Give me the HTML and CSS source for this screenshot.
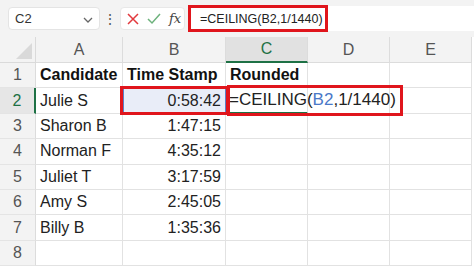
FILE: index.html
```html
<!DOCTYPE html>
<html lang="en">
<head>
    <meta charset="UTF-8">
    <title>CEILING</title>
    <link rel="stylesheet" href="styles.css">
</head>
<body>
    <div class="toolbar">
        <div class="namebox">
            <span>C2</span>
            <svg class="chev" width="10" height="6" viewBox="0 0 10 6"><path d="M1 1l4 4 4-4" fill="none" stroke="#666" stroke-width="1.3"/></svg>
        </div>
        <div class="dots">&#8942;</div>
        <div class="fnbox">
            <svg width="12" height="12" viewBox="0 0 12 12"><path d="M1 1l10 10M11 1L1 11" stroke="#e2393e" stroke-width="1.5"/></svg>
            <svg width="14" height="12" viewBox="0 0 14 12"><path d="M1 6l4 4 8-9" fill="none" stroke="#6db27c" stroke-width="1.5"/></svg>
            <span class="fx">fx</span>
        </div>
        <div class="formula">
            <span class="ftext">=CEILING(B2,1/1440)</span>
            <div class="redbox bar-red"></div>
        </div>
    </div>

    <div class="sheet">
        <div class="corner"></div>
        <div class="colhead">A</div>
        <div class="colhead">B</div>
        <div class="colhead active">C</div>
        <div class="colhead">D</div>
        <div class="colhead">E</div>

        <div class="rowhead">1</div>
        <div class="cell bold">Candidate</div>
        <div class="cell bold">Time Stamp</div>
        <div class="cell bold">Rounded</div>
        <div class="cell"></div>
        <div class="cell"></div>

        <div class="rowhead active">2</div>
        <div class="cell">Julie S</div>
        <div class="cell num ref">0:58:42</div>
        <div class="cell editing">=CEILING(<span class="blue">B2</span>,1/1440)</div>
        <div class="cell"></div>
        <div class="cell"></div>

        <div class="rowhead">3</div>
        <div class="cell">Sharon B</div>
        <div class="cell num">1:47:15</div>
        <div class="cell"></div>
        <div class="cell"></div>
        <div class="cell"></div>

        <div class="rowhead">4</div>
        <div class="cell">Norman F</div>
        <div class="cell num">4:35:12</div>
        <div class="cell"></div>
        <div class="cell"></div>
        <div class="cell"></div>

        <div class="rowhead">5</div>
        <div class="cell">Juliet T</div>
        <div class="cell num">3:17:59</div>
        <div class="cell"></div>
        <div class="cell"></div>
        <div class="cell"></div>

        <div class="rowhead">6</div>
        <div class="cell">Amy S</div>
        <div class="cell num">2:45:05</div>
        <div class="cell"></div>
        <div class="cell"></div>
        <div class="cell"></div>

        <div class="rowhead">7</div>
        <div class="cell">Billy B</div>
        <div class="cell num">1:35:36</div>
        <div class="cell"></div>
        <div class="cell"></div>
        <div class="cell"></div>

        <div class="rowhead">8</div>
        <div class="cell"></div>
        <div class="cell"></div>
        <div class="cell"></div>
        <div class="cell"></div>
        <div class="cell"></div>

        <div class="redbox b2-red"></div>
        <div class="redbox c2-red"></div>
    </div>
</body>
</html>
```

FILE: styles.css
```css
body {
    margin: 0;
    background: #fff;
    font-family: "Liberation Sans", Arial, sans-serif;
    overflow: hidden;
}
.toolbar {
    height: 37px;
    background: #f3f3f3;
    display: flex;
    align-items: center;
    padding-left: 8px;
    box-sizing: border-box;
}
.namebox {
    width: 92px;
    height: 23px;
    background: #fff;
    border: 1px solid #e4e4e4;
    border-radius: 4px;
    box-sizing: border-box;
    display: flex;
    align-items: center;
    justify-content: space-between;
    padding: 0 6px 0 6px;
    font-size: 13px;
    color: #333;
}
.chev {
    margin-top: 2px;
}
.dots {
    width: 20px;
    text-align: center;
    font-size: 14px;
    color: #555;
}
.fnbox {
    width: 65px;
    height: 23px;
    background: #fff;
    border: 1px solid #e8e8e8;
    border-radius: 4px;
    box-sizing: border-box;
    display: flex;
    align-items: center;
    gap: 8px;
    padding-left: 6px;
}
.fx {
    font-family: "DejaVu Serif", serif;
    font-style: italic;
    font-size: 13px;
    color: #444;
}
.formula {
    flex: 1;
    height: 25px;
    margin-left: 5px;
    background: #fff;
    display: flex;
    align-items: center;
    padding-left: 10px;
    font-size: 12.5px;
    color: #222;
    position: relative;
}
.sheet {
    display: grid;
    grid-template-columns: 36px 87px 103px 82px 82px 82px;
    grid-template-rows: 26px repeat(8, 25.4px);
    position: relative;
}
.corner {
    background: #f3f3f3;
    border-right: 1px solid #dadada;
    border-bottom: 1px solid #dadada;
    position: relative;
}
.corner::after {
    content: "";
    position: absolute;
    right: 3px;
    bottom: 3px;
    border-left: 16px solid transparent;
    border-bottom: 16px solid #d9d9d9;
}
.colhead {
    background: #f3f3f3;
    border-right: 1px solid #dcdcdc;
    border-bottom: 1px solid #dcdcdc;
    display: flex;
    align-items: center;
    justify-content: center;
    font-size: 16px;
    color: #555;
}
.colhead.active {
    background: #e1e1e1;
    color: #1e7145;
    border-bottom: 2px solid #1e7145;
}
.rowhead {
    background: #f3f3f3;
    border-right: 1px solid #dcdcdc;
    border-bottom: 1px solid #e4e4e4;
    display: flex;
    align-items: center;
    justify-content: center;
    font-size: 16px;
    color: #555;
}
.rowhead.active {
    background: #e6e6e6;
    color: #1e7145;
    border-right: 2px solid #1e7145;
}
.cell {
    border-right: 1px solid #e2e2e2;
    border-bottom: 1px solid #e2e2e2;
    display: flex;
    align-items: center;
    padding: 0 4px;
    font-size: 16px;
    color: #222;
    white-space: nowrap;
    box-sizing: border-box;
}
.bold {
    font-weight: bold;
    color: #111;
    overflow: visible;
}
.num {
    justify-content: flex-end;
}
.ref {
    background: #e9edf8;
    border: 1px solid #5b7fc6;
}
.editing {
    border-left: 2px solid #1e7145;
    border-bottom: 2px solid #1e7145;
    padding-left: 1px;
    font-size: 17px;
    overflow: visible;
    position: relative;
    z-index: 1;
}
.blue {
    color: #4a78c8;
}
.redbox {
    position: absolute;
    border: 3px solid #e0151c;
    box-sizing: border-box;
    pointer-events: none;
    z-index: 2;
}
.bar-red {
    left: -2px;
    top: -1px;
    width: 140px;
    height: 27px;
}
.b2-red {
    left: 120px;
    top: 49px;
    width: 109px;
    height: 29px;
}
.c2-red {
    left: 227px;
    top: 48px;
    width: 176px;
    height: 31px;
}
```
